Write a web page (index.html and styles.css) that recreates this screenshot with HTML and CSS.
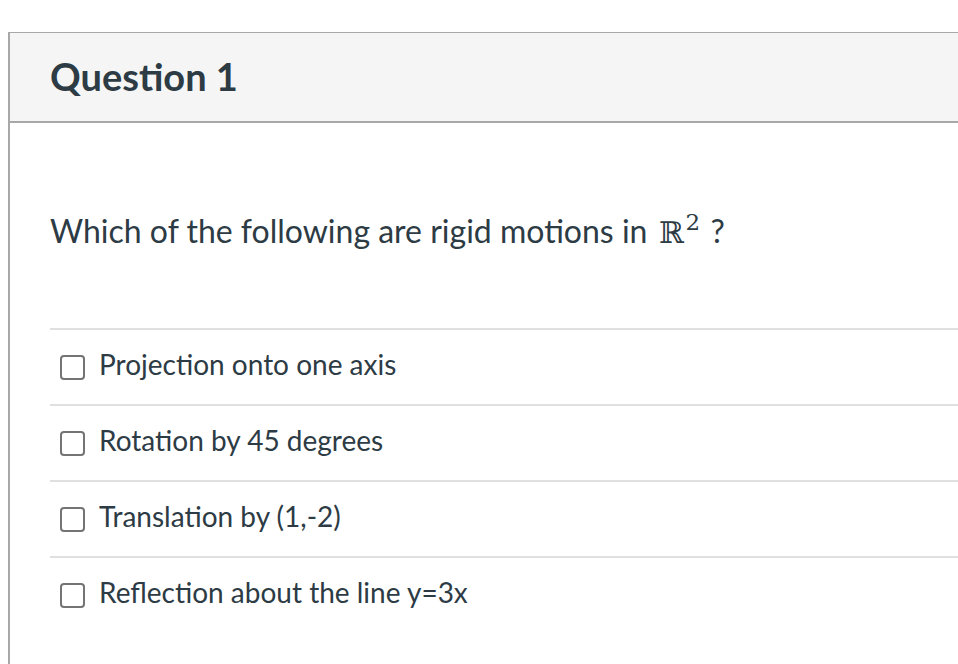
FILE: index.html
```html
<!DOCTYPE html>
<html>
<head>
<meta charset="utf-8">
<link rel="stylesheet" href="styles.css">
</head>
<body>
<div class="question">
  <div class="q-header">
    <h2 class="q-title">Question 1</h2>
  </div>
  <div class="q-body">
    <p class="q-text">Which of the following are rigid motions in <span class="math">ℝ<sup>2</sup></span> ?</p>
    <ul class="answers">
      <li class="answer"><span class="box"></span><span class="label">Projection onto one axis</span></li>
      <li class="answer"><span class="box"></span><span class="label">Rotation by 45 degrees</span></li>
      <li class="answer"><span class="box"></span><span class="label">Translation by (1,-2)</span></li>
      <li class="answer"><span class="box"></span><span class="label">Reflection about the line y=3x</span></li>
    </ul>
  </div>
</div>
</body>
</html>
```
FILE: styles.css
```css
html, body {
  margin: 0;
  padding: 0;
  background: #fff;
  overflow: hidden;
  height: 664px;
}
body {
  padding: 32px 0 0 8px;
  box-sizing: border-box;
  font-family: Lato, "Open Sans", sans-serif;
  color: #2d3b45;
}
.question {
  border-top: 1px solid #a8a8a8;
  border-left: 2px solid #a8a8a8;
  margin-right: -40px;
  height: 640px;
}
.q-header {
  background: #f5f5f5;
  border-bottom: 2px solid #a8a8a8;
  height: 88px;
  display: flex;
  align-items: center;
  padding-left: 40px;
}
.q-title {
  margin: 0;
  font-size: 38px;
  font-weight: 700;
  line-height: 1;
  position: relative;
  top: -1px;
}
.q-body {
  padding-left: 40px;
}
.q-text {
  margin: 0;
  padding-top: 88px;
  font-size: 32px;
  line-height: 40px;
  height: 117px;
}
.math {
  font-family: "DejaVu Serif", serif;
  font-size: 30px;
  margin-left: 3px;
}
.math sup {
  font-size: 23px;
  vertical-align: 13px;
  line-height: 0;
  margin-left: 2px;
  margin-right: 2px;
}
.answers {
  list-style: none;
  margin: 0;
  padding: 0;
}
.answer {
  border-top: 2px solid #e0e0e0;
  height: 74px;
  display: flex;
  align-items: center;
  gap: 14px;
  padding-left: 10px;
}
.box {
  width: 21px;
  height: 21px;
  border: 2px solid #747474;
  border-radius: 4px;
  flex: none;
}
.label {
  font-size: 28px;
  line-height: 1;
  position: relative;
  top: -3px;
}
```
